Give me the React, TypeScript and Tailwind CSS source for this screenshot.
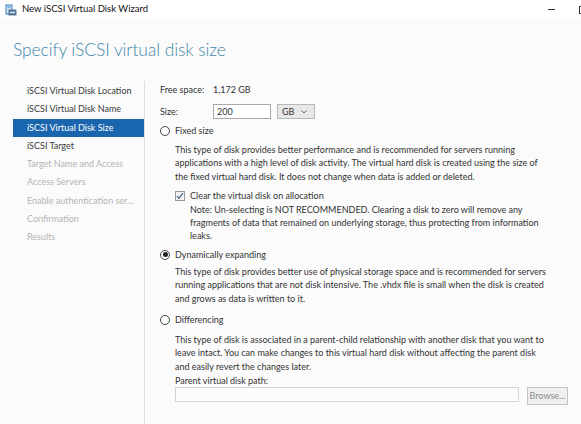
import React from "react";

const font = { fontFamily: "Lato, 'Noto Sans', sans-serif" };

function Radio({ checked }: { checked?: boolean }) {
  return (
    <span className="w-[10px] h-[10px] rounded-full border border-[#444] bg-white flex items-center justify-center shrink-0">
      {checked && <span className="w-[5px] h-[5px] rounded-full bg-[#222]" />}
    </span>
  );
}

function Check() {
  return (
    <span className="w-[10px] h-[10px] border border-[#9a9a9a] bg-[#f4f4f4] flex items-center justify-center shrink-0">
      <svg width="8" height="8" viewBox="0 0 8 8">
        <path d="M1 4.2 L3 6.2 L7 1.2" stroke="#4d6a86" strokeWidth="1.3" fill="none" />
      </svg>
    </span>
  );
}

function Lines({ lines, className = "" }: { lines: string[]; className?: string }) {
  return (
    <div className={className}>
      {lines.map((l, i) => (
        <div key={i} className="h-[13.4px] leading-[13.4px] whitespace-nowrap">
          {l}
        </div>
      ))}
    </div>
  );
}

export default function App() {
  const nav = [
    { t: "iSCSI Virtual Disk Location", s: "n" },
    { t: "iSCSI Virtual Disk Name", s: "n" },
    { t: "iSCSI Virtual Disk Size", s: "a" },
    { t: "iSCSI Target", s: "n" },
    { t: "Target Name and Access", s: "d" },
    { t: "Access Servers", s: "d" },
    { t: "Enable authentication ser...", s: "d" },
    { t: "Confirmation", s: "d" },
    { t: "Results", s: "d" },
  ];
  return (
    <div className="w-[581px] h-[424px] overflow-hidden bg-[#fbfbfb] text-[#333] text-[9px] flex flex-col" style={font}>
      {/* title bar */}
      <div className="h-[19px] bg-white flex items-center shrink-0 relative">
        <svg className="ml-[5px]" width="12" height="12" viewBox="0 0 12 12">
          <rect x="1" y="1" width="6" height="9" fill="#cfe3f5" stroke="#3a7fc4" strokeWidth="1" />
          <rect x="2.5" y="2.5" width="3" height="1" fill="#3a7fc4" />
          <rect x="4" y="6" width="7" height="5" fill="#6d8fb0" stroke="#35597d" strokeWidth="0.8" />
          <rect x="5" y="8" width="5" height="1" fill="#dfe9f3" />
        </svg>
        <span className="ml-[5px] text-[9.5px] text-[#111]">New iSCSI Virtual Disk Wizard</span>
        <div className="flex-1" />
        <div className="w-[7px] h-px bg-[#333] mr-[24px]" />
        <div className="w-[6px] h-[8px] border border-[#333] mr-[-4px]" />
      </div>

      {/* header */}
      <div className="h-[62px] shrink-0 pl-[13px] pt-[20px]">
        <div className="text-[17.5px] leading-[22px] text-[#3f87ab] font-light tracking-[-0.1px]">
          Specify iSCSI virtual disk size
        </div>
      </div>

      <div className="flex flex-1 min-h-0">
        {/* nav */}
        <div className="w-[145px] shrink-0 border-r border-[#dedede] pl-[13px] pt-[1px]">
          {nav.map((n, i) => (
            <div
              key={i}
              className={
                "h-[18.25px] leading-[18.25px] pl-[14px] whitespace-nowrap " +
                (n.s === "a"
                  ? "bg-[#1966ae] text-white"
                  : n.s === "d"
                  ? "text-[#b4b4b4]"
                  : "text-[#3a3a3a]")
              }
            >
              {n.t}
            </div>
          ))}
        </div>

        {/* content */}
        <div className="flex-1 pl-[15px] pt-[2px]">
          <div className="flex h-[14px] items-center">
            <span className="w-[53px]">Free space:</span>
            <span>1,172 GB</span>
          </div>
          <div className="flex h-[15px] items-center mt-[7px]">
            <span className="w-[53px]">Size:</span>
            <div className="w-[58px] h-[15px] border border-[#a9a9a9] bg-white flex items-center pl-[3px]">200</div>
            <div className="w-[38px] h-[15px] border border-[#b8b8b8] bg-[#e8e8e8] ml-[6px] flex items-center pl-[4px]">
              <span>GB</span>
              <svg className="ml-[7px]" width="6" height="4" viewBox="0 0 6 4">
                <path d="M0.5 0.5 L3 3 L5.5 0.5" stroke="#555" strokeWidth="0.9" fill="none" />
              </svg>
            </div>
          </div>

          <div className="flex h-[14px] items-center mt-[5px] gap-[5px]">
            <Radio />
            <span>Fixed size</span>
          </div>
          <Lines
            className="ml-[15px] mt-[5px]"
            lines={[
              "This type of disk provides better performance and is recommended for servers running",
              "applications with a high level of disk activity. The virtual hard disk is created using the size of",
              "the fixed virtual hard disk. It does not change when data is added or deleted.",
            ]}
          />
          <div className="ml-[15px] flex h-[13.5px] items-center mt-[6px] gap-[5px]">
            <Check />
            <span>Clear the virtual disk on allocation</span>
          </div>
          <Lines
            className="ml-[30px]"
            lines={[
              "Note: Un-selecting is NOT RECOMMENDED. Clearing a disk to zero will remove any",
              "fragments of data that remained on underlying storage, thus protecting from information",
              "leaks.",
            ]}
          />

          <div className="flex h-[14px] items-center mt-[5px] gap-[5px]">
            <Radio checked />
            <span>Dynamically expanding</span>
          </div>
          <Lines
            className="ml-[15px] mt-[3px]"
            lines={[
              "This type of disk provides better use of physical storage space and is recommended for servers",
              "running applications that are not disk intensive. The .vhdx file is small when the disk is created",
              "and grows as data is written to it.",
            ]}
          />

          <div className="flex h-[14px] items-center mt-[8px] gap-[5px]">
            <Radio />
            <span>Differencing</span>
          </div>
          <Lines
            className="ml-[15px] mt-[6px]"
            lines={[
              "This type of disk is associated in a parent-child relationship with another disk that you want to",
              "leave intact. You can make changes to this virtual hard disk without affecting the parent disk",
              "and easily revert the changes later.",
            ]}
          />
          <div className="ml-[15px] mt-[1px] h-[13.5px] leading-[13.5px]">Parent virtual disk path:</div>
          <div className="ml-[15px] mt-[-1px] flex items-start">
            <div className="w-[344px] h-[15px] border border-[#d4d4d4] bg-[#fcfcfc]" />
            <div className="ml-[8px] w-[41px] h-[18px] border border-[#c4c4c4] bg-[#f0f0f0] text-[#8a8a8a] flex items-center justify-center">
              Browse...
            </div>
          </div>
        </div>
      </div>
    </div>
  );
}
